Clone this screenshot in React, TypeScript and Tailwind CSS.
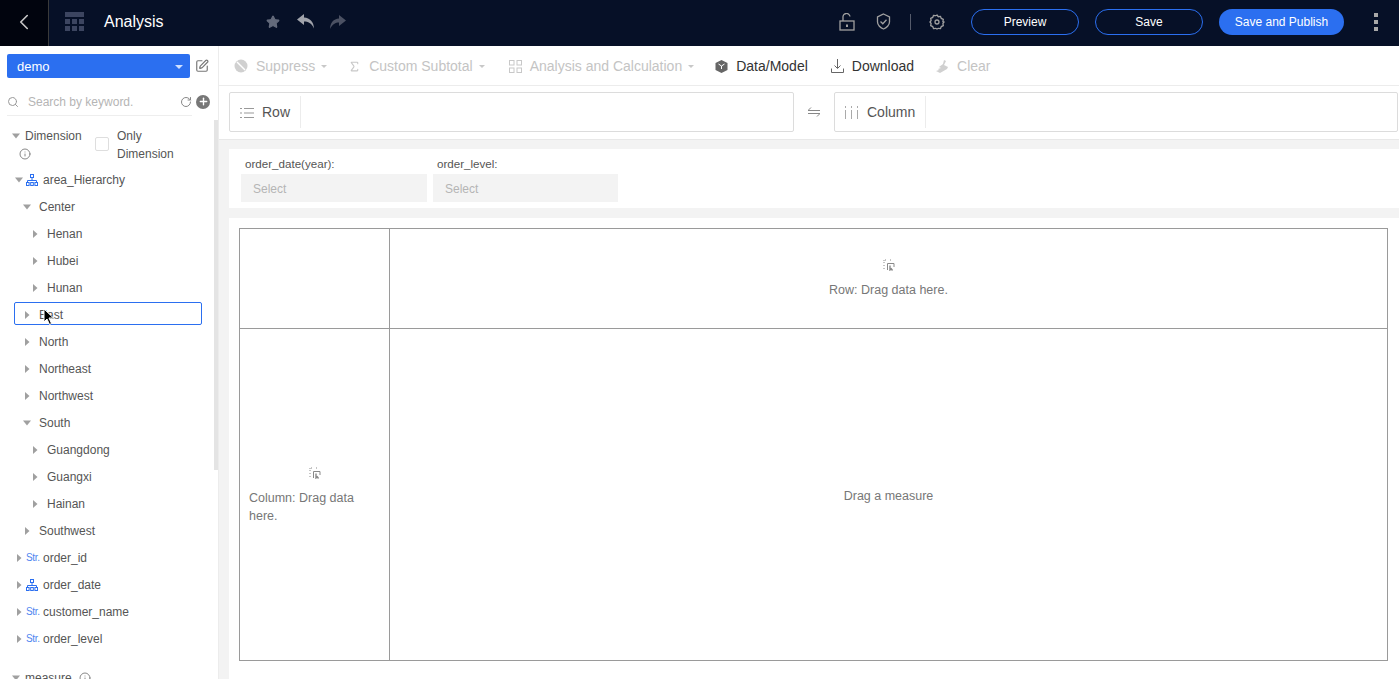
import { ChevronLeft, RotateCw, Search, Sigma, Star, SquarePen, Info, Plus } from "lucide-react";

const Caret = ({ open }: { open?: boolean }) => (
  <svg width="8" height="8" viewBox="0 0 8 8" className="shrink-0 fill-[#a0a0a0]">
    {open ? <path d="M0 1.500h8L4 6.500z" /> : <path d="M2 0v8L6.500 4z" />}
  </svg>
);

const HierarchyIcon = () => (
  <svg width="12" height="12" viewBox="0 0 12 12" className="shrink-0 fill-none stroke-[#2b6ff0]">
    <rect x="4.500" y="0.500" width="3" height="3" />
    <path d="M6 3.500v3M1.500 8V6.500h9V8" />
    <rect x="0.500" y="8.500" width="2.600" height="3" />
    <rect x="4.700" y="8.500" width="2.600" height="3" />
    <rect x="8.900" y="8.500" width="2.600" height="3" />
  </svg>
);

const StrIcon = () => <span className="block w-[12px] shrink-0 text-[10px] leading-none tracking-[-0.3px] text-[#4f86f0]">Str.</span>;

const DropIcon = () => (
  <svg width="12" height="12" viewBox="0 0 12 12" className="fill-none stroke-[#8a8a8a]">
    <path d="M1 4V1h3M8 1h-1M1 7V6M1 10V9" strokeDasharray="1 1" />
    <path d="M4.500 11V4.500H11V8" />
    <path d="M7 6.500v4.500l1.300-1.200L9.500 11.500" strokeWidth="1.400" />
  </svg>
);

type Node = { label: string; left: number; open?: boolean; kind?: "str" | "tree"; selected?: boolean };

const nodes: Node[] = [
  { label: "area_Hierarchy", left: 15, open: true, kind: "tree" },
  { label: "Center", left: 23, open: true },
  { label: "Henan", left: 31 },
  { label: "Hubei", left: 31 },
  { label: "Hunan", left: 31 },
  { label: "East", left: 23, selected: true },
  { label: "North", left: 23 },
  { label: "Northeast", left: 23 },
  { label: "Northwest", left: 23 },
  { label: "South", left: 23, open: true },
  { label: "Guangdong", left: 31 },
  { label: "Guangxi", left: 31 },
  { label: "Hainan", left: 31 },
  { label: "Southwest", left: 23 },
  { label: "order_id", left: 15, kind: "str" },
  { label: "order_date", left: 15, kind: "tree" },
  { label: "customer_name", left: 15, kind: "str" },
  { label: "order_level", left: 15, kind: "str" },
];

const TreeRow = ({ node }: { node: Node }) => (
  <div className="relative flex h-[27px] items-center" style={{ paddingLeft: node.left }}>
    {node.selected && (
      <div className="absolute left-[14px] top-[1px] h-[23px] w-[188px] rounded-[2px] border border-[#2b6ff0]" />
    )}
    <Caret open={node.open} />
    {node.kind === "tree" && <span className="ml-[3px]"><HierarchyIcon /></span>}
    {node.kind === "str" && <span className="ml-[3px]"><StrIcon /></span>}
    <span className={node.kind ? "ml-[5px]" : "ml-[8px]"}>{node.label}</span>
    {node.selected && (
      <svg width="12" height="18" viewBox="0 0 12 18" className="absolute left-[43px] top-[7px]">
        <path d="M1 1v13l3-3 2.500 5.500 2-1L6 10h4.500z" fill="#000" stroke="#fff" strokeWidth="1" />
      </svg>
    )}
  </div>
);

const Tool = ({ icon, label, caret, active }: { icon: React.ReactNode; label: string; caret?: boolean; active?: boolean }) => (
  <div className={`flex items-center gap-2 text-[14px] ${active ? "text-[#333]" : "text-[#c4c4c4]"}`}>
    {icon}
    <span>{label}</span>
    {caret && <span className="-ml-[2px] h-0 w-0 border-x-[3px] border-t-[3px] border-x-transparent border-t-[#c8c8c8]" />}
  </div>
);

export default function App() {
  return (
    <div className="flex h-[679px] w-[1399px] flex-col overflow-hidden bg-white text-[#555] font-['Liberation_Sans',Arial,sans-serif] text-[12px]">
      {/* top bar */}
      <header className="flex h-[46px] shrink-0 items-center bg-[#061027]">
        <div className="flex h-full w-[49px] items-center justify-center border-r border-[#3a3a3a] bg-[#01040e] pb-[3px]">
          <ChevronLeft size={26} strokeWidth={1.500} className="text-[#c8c8c8]" />
        </div>
        <div className="flex h-full flex-1 items-center pb-[3px]">
          <svg width="19" height="20" viewBox="0 0 19 20" className="ml-[16px] fill-[#3c4560]">
            <rect x="0" y="0" width="19" height="5" />
            <rect x="0" y="7" width="5" height="5" />
            <rect x="7" y="7" width="5" height="5" />
            <rect x="14" y="7" width="5" height="5" />
            <rect x="0" y="14" width="5" height="5" />
            <rect x="7" y="14" width="5" height="5" />
            <rect x="14" y="14" width="5" height="5" />
          </svg>
          <span className="ml-[20px] text-[16px] text-white">Analysis</span>
          <Star size={14} className="ml-[102px] fill-[#636a7b] text-[#636a7b]" />
          <svg width="18" height="15" viewBox="0 0 18 15" className="ml-[17px] fill-[#a0a3ab]">
            <path d="M7 0 0 5.500 7 11V7.500c4 0 7.500 1.500 10 7-.2-6.500-4-10.500-10-11z" />
          </svg>
          <svg width="16" height="14" viewBox="0 0 16 14" className="ml-[15px] fill-[#4b5163]">
            <path d="M9 0l7 5.500L9 11V7.500C5.500 7.500 2.500 9 0 14 .2 7.500 3.500 4 9 3.500z" />
          </svg>
          <div className="flex-1" />
          <svg width="16" height="18" viewBox="0 0 16 18" className="fill-none stroke-[#a0a0a0] stroke-[1.300]">
            <rect x="1" y="8" width="14" height="9" />
            <path d="M4 8V4.500a3.500 3.500 0 0 1 7-1" />
            <path d="M8 11.500v2.500" strokeWidth="2" />
          </svg>
          <svg width="15" height="17" viewBox="0 0 15 17" className="ml-[21px] fill-none stroke-[#a0a0a0] stroke-[1.300]">
            <path d="M7.500 1l6 3v5c0 3-3 6-6 7-3-1-6-4-6-7V4z" />
            <path d="M4.500 8.500l2.300 2.200 3.700-4" />
          </svg>
          <div className="ml-[19px] h-[16px] w-px bg-[#555b6b]" />
          <svg width="16" height="16" viewBox="0 0 16 16" className="ml-[18px] fill-none stroke-[#a0a0a0] stroke-[1.300]">
            <path d="M8 1l1.300 1.700 2.200-.3.800 2 2 .9-.4 2.200L15 8l-1.100 1.500.4 2.200-2 .9-.8 2-2.200-.3L8 15l-1.300-.7-2.200.3-.8-2-2-.9.400-2.200L1 8l1.100-1.500-.4-2.200 2-.9.800-2 2.200.3z" />
            <circle cx="8" cy="8" r="2" />
          </svg>
          <button className="ml-[26px] h-[26px] w-[108px] rounded-full border border-[#2b6ff0] text-white">Preview</button>
          <button className="ml-[16px] h-[26px] w-[108px] rounded-full border border-[#2b6ff0] text-white">Save</button>
          <button className="ml-[16px] h-[26px] w-[125px] rounded-full bg-[#2b6ff0] text-white">Save and Publish</button>
          <div className="ml-[30px] mr-[21px] flex flex-col gap-[3px]">
            <span className="h-[4px] w-[4px] bg-[#a8a8a8]" />
            <span className="h-[4px] w-[4px] bg-[#a8a8a8]" />
            <span className="h-[4px] w-[4px] bg-[#a8a8a8]" />
          </div>
        </div>
      </header>

      <div className="flex min-h-0 flex-1">
        {/* data panel */}
        <aside className="relative w-[219px] shrink-0 overflow-hidden border-r border-[#ececec]">
          <div className="absolute left-[214px] top-[74px] h-[350px] w-[4px] bg-[#e4e4e4]" />
          <div className="flex items-center pl-[7px] pt-[8px]">
            <div className="flex h-[24px] w-[183px] items-center justify-between rounded-[2px] bg-[#2b6ff0] pl-[10px] pr-[7px] pt-[1px] text-[13px] text-white">
              <span>demo</span>
              <span className="h-0 w-0 border-x-[4px] border-t-[4px] border-x-transparent border-t-[#cfe0ff]" />
            </div>
            <SquarePen size={14} className="ml-[5px] text-[#777]" />
          </div>
          <div className="mx-[7px] mt-[12px] flex h-[26px] w-[185px] items-center border-b border-[#eeeeee] pb-[2px]">
            <Search size={12} className="text-[#999]" />
            <span className="ml-[9px] text-[#b5b5b5]">Search by keyword.</span>
            <RotateCw size={12} className="ml-auto mr-[4px] text-[#888]" />
            <span className="-mr-[18px] flex h-[14px] w-[14px] items-center justify-center rounded-full bg-[#777]">
              <Plus size={11} strokeWidth={3} className="text-white" />
            </span>
          </div>
          <div className="flex pl-[12px] pt-[11px] leading-[18px]">
            <div className="w-[83px]">
              <div className="flex items-center gap-[5px]">
                <Caret open />
                <span>Dimension</span>
              </div>
              <Info size={12} className="ml-[7px] mt-[3px] text-[#888]" />
            </div>
            <span className="mt-[10px] h-[14px] w-[14px] rounded-[2px] border border-[#dedede]" />
            <div className="ml-[8px]">Only<br />Dimension</div>
          </div>
          <div className="mt-[3px]">
            {nodes.map((node) => (
              <TreeRow key={node.label} node={node} />
            ))}
          </div>
          <div className="mt-[17px] flex items-center gap-[5px] pl-[12px]">
            <Caret open />
            <span>measure</span>
            <Info size={12} className="ml-[2px] text-[#888]" />
          </div>
        </aside>

        <main className="flex min-w-0 flex-1 flex-col bg-[#f3f3f3]">
          {/* toolbar */}
          <div className="flex h-[40px] shrink-0 items-center border-b border-[#ececec] bg-white pl-[15px] pt-[1px]">
            <Tool
              caret
              label="Suppress"
              icon={
                <svg width="14" height="14" viewBox="0 0 14 14">
                  <circle cx="7" cy="7" r="6.500" fill="#d0d0d0" />
                  <path d="M3 3l8 8" stroke="#fff" strokeWidth="1.500" />
                </svg>
              }
            />
            <div className="ml-[21px]">
              <Tool caret label="Custom Subtotal" icon={<Sigma size={13} className="text-[#c8c8c8]" />} />
            </div>
            <div className="ml-[24px]">
              <Tool
                caret
                label="Analysis and Calculation"
                icon={
                  <svg width="13" height="13" viewBox="0 0 13 13" className="fill-none stroke-[#c8c8c8]">
                    <rect x="0.500" y="0.500" width="4.500" height="4.500" />
                    <rect x="8" y="0.500" width="4.500" height="4.500" />
                    <rect x="0.500" y="8" width="4.500" height="4.500" />
                    <rect x="8" y="8" width="4.500" height="4.500" />
                  </svg>
                }
              />
            </div>
            <div className="ml-[21px]">
              <Tool
                active
                label="Data/Model"
                icon={
                  <svg width="13" height="13" viewBox="0 0 13 13">
                    <path d="M6.500 0l6 3v7l-6 3-6-3V3z" fill="#666" />
                    <path d="M3.500 4l3 2 3-2M6.500 6v3" stroke="#fff" fill="none" />
                  </svg>
                }
              />
            </div>
            <div className="ml-[23px]">
              <Tool
                active
                label="Download"
                icon={
                  <svg width="13" height="14" viewBox="0 0 13 14" className="fill-none stroke-[#666]">
                    <path d="M6.500 0v9M3.500 6.500l3 3 3-3M.5 9.500v4h12v-4" />
                  </svg>
                }
              />
            </div>
            <div className="ml-[22px]">
              <Tool
                label="Clear"
                icon={
                  <svg width="13" height="13" viewBox="0 0 13 13" className="fill-[#d0d0d0]">
                    <path d="M8 0l2 1-2 4 4 2-1 2-7 4-4-2 3-1-1-1 3-1-2-1 4-3z" />
                  </svg>
                }
              />
            </div>
          </div>

          {/* row / column shelves */}
          <div className="flex h-[54px] shrink-0 items-start border-b border-[#e8e8e8] bg-white pl-[10px] pr-px pt-[6px]">
            <div className="flex h-[40px] w-[565px] items-center rounded-[2px] border border-[#dcdcdc]">
              <div className="flex h-[32px] items-center gap-[8px] border-r border-[#ececec] pl-[10px] pr-[10px] pt-[1px] text-[14px]">
                <svg width="14" height="12" viewBox="0 0 14 12" className="stroke-[#999]">
                  <path d="M4 1.500h10M4 6h10M4 10.500h10M0 1.500h2M0 6h2M0 10.500h2" />
                </svg>
                <span>Row</span>
              </div>
            </div>
            <svg width="12" height="10" viewBox="0 0 12 10" className="mx-[14px] mt-[15px] fill-none stroke-[#888]">
              <path d="M0 3.500h12M0 3.500l3-3M12 6.500H0M12 6.500l-3 3" />
            </svg>
            <div className="flex h-[40px] flex-1 items-center rounded-[2px] border border-[#dcdcdc]">
              <div className="flex h-[32px] items-center gap-[8px] border-r border-[#ececec] pl-[9px] pr-[10px] pt-[1px] text-[14px]">
                <svg width="15" height="13" viewBox="0 0 15 13" className="stroke-[#aaa]">
                  <path d="M1.500 4v9M7.500 4v9M13.500 4v9M1.500 0v2M7.500 0v2M13.500 0v2" />
                </svg>
                <span>Column</span>
              </div>
            </div>
          </div>

          {/* filters */}
          <div className="ml-[10px] mt-[9px] flex h-[59px] shrink-0 gap-[6px] bg-white pl-[12px] pt-[7px]">
            <div className="w-[186px]">
              <div className="h-[18px] pl-[4px] text-[11.600px] leading-[16px]">order_date(year):</div>
              <div className="flex h-[28px] items-center bg-[#f3f3f3] pl-[12px] pt-[1px] text-[#b5b5b5]">Select</div>
            </div>
            <div className="w-[185px]">
              <div className="h-[18px] pl-[4px] text-[11.600px] leading-[16px]">order_level:</div>
              <div className="flex h-[28px] items-center bg-[#f3f3f3] pl-[12px] pt-[1px] text-[#b5b5b5]">Select</div>
            </div>
          </div>

          {/* drop table */}
          <div className="ml-[10px] mt-[10px] min-h-0 flex-1 bg-white pl-[10px] pr-[11px] pt-[10px]">
            <div className="grid h-[433px] grid-cols-[150px_1fr] grid-rows-[100px_1fr] border border-[#9a9a9a] text-[12.500px] text-[#777]">
              <div className="border-b border-r border-[#9a9a9a]" />
              <div className="flex flex-col items-center gap-[10px] border-b border-[#9a9a9a] pt-[30px]">
                <DropIcon />
                <span>Row: Drag data here.</span>
              </div>
              <div className="flex flex-col justify-center border-r border-[#9a9a9a] px-[9px] pt-[2px] leading-[18px]">
                <div className="mb-[10px] flex justify-center"><DropIcon /></div>
                <span>Column: Drag data here.</span>
              </div>
              <div className="flex items-center justify-center pt-[4px]">Drag a measure</div>
            </div>
          </div>
        </main>
      </div>
    </div>
  );
}
